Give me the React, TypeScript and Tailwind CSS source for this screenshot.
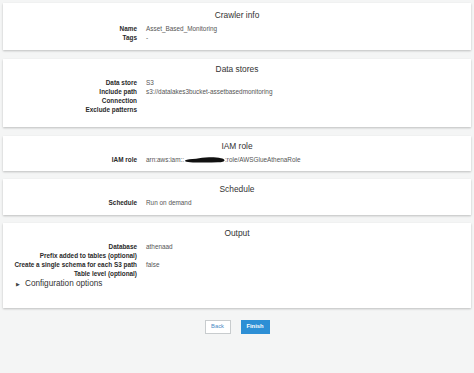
import { ReactNode } from "react";

type Row = { label: string; value?: ReactNode };

function Panel({
  title,
  rows,
  className = "",
  children,
}: {
  title: string;
  rows: Row[];
  className?: string;
  children?: ReactNode;
}) {
  return (
    <section
      className={`bg-white shadow-[0_1px_2px_rgba(0,0,0,0.22)] ${className}`}
    >
      <h2 className="h-[13px] text-center text-[8.4px] leading-[13px] text-[#333]">
        {title}
      </h2>
      <div className="mt-[2px]">
        {rows.map((r) => (
          <div key={r.label} className="flex h-[9px] items-center leading-[9px]">
            <div className="w-[134px] shrink-0 text-right text-[6.4px] font-bold text-[#2a2a2a]">
              {r.label}
            </div>
            <div className="ml-[9px] text-[6.4px] text-[#555]">{r.value}</div>
          </div>
        ))}
      </div>
      {children}
    </section>
  );
}

// black scribble hiding the account id
function Redacted() {
  return (
    <svg width="41" height="8" viewBox="0 0 41 8" className="inline-block align-middle">
      <path
        d="M1 4.6 C3 3.2 7 3 12 2.8 C16 2.2 20 1.4 25 1.3 C30 1.2 34 1.6 37 2.2 C39 2.6 40.5 3.4 40.5 4.4 C40.5 5.6 38 6.2 34 6.2 C28 6.4 22 6.6 16 6.4 C10 6.6 5 6.4 2.5 5.8 C1.4 5.5 0.8 5.1 1 4.6 Z"
        fill="#111"
      />
    </svg>
  );
}

export default function App() {
  return (
    <div
      className="flex min-h-[373px] w-[474px] flex-col gap-[8px] bg-[#f4f5f5] px-[3px] pt-[3px]"
      style={{ fontFamily: '"Liberation Sans", Arial, sans-serif' }}
    >
      <Panel
        title="Crawler info"
        className="pt-[6px] pb-[8px]"
        rows={[
          { label: "Name", value: "Asset_Based_Monitoring" },
          { label: "Tags", value: "-" },
        ]}
      />

      <Panel
        title="Data stores"
        className="mt-[1px] pt-[4px] pb-[13px]"
        rows={[
          { label: "Data store", value: "S3" },
          { label: "Include path", value: "s3://datalakes3bucket-assetbasedmonitoring" },
          { label: "Connection" },
          { label: "Exclude patterns" },
        ]}
      />

      <Panel
        title="IAM role"
        className="mt-[1px] pt-[4px] pb-[7px]"
        rows={[
          {
            label: "IAM role",
            value: (
              <span className="inline-flex items-center">
                arn:aws:iam::
                <Redacted />
                :role/AWSGlueAthenaRole
              </span>
            ),
          },
        ]}
      />

      <Panel
        title="Schedule"
        className="pt-[4px] pb-[8px]"
        rows={[{ label: "Schedule", value: "Run on demand" }]}
      />

      <Panel
        title="Output"
        className="pt-[4px] pb-[18px]"
        rows={[
          { label: "Database", value: "athenaad" },
          { label: "Prefix added to tables (optional)" },
          { label: "Create a single schema for each S3 path", value: "false" },
          { label: "Table level (optional)" },
        ]}
      >
        <div className="flex h-[12px] items-center pl-[13px] text-[8.2px] leading-[12px] text-[#333]">
          <span className="mr-[5px] text-[5px] text-[#444]">▶</span>
          Configuration options
        </div>
      </Panel>

      <div className="mt-[4px] flex justify-center gap-[10px]">
        <button className="h-[14px] w-[26px] border border-[#c8ccce] bg-white text-[5.8px] leading-none text-[#4a8ac4]">
          Back
        </button>
        <button className="h-[14px] w-[29px] bg-[#2d8fd5] text-[5.8px] font-bold leading-none text-white">
          Finish
        </button>
      </div>
    </div>
  );
}
